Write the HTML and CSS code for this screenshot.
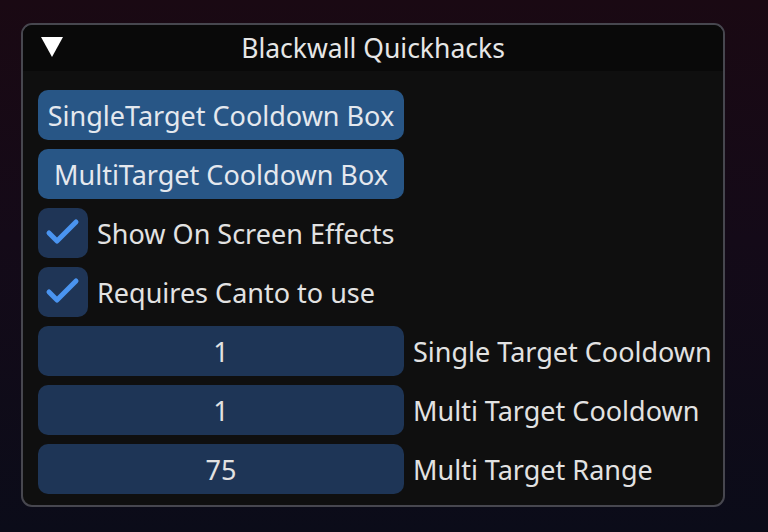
FILE: index.html
```html
<!DOCTYPE html>
<html>
<head>
<meta charset="utf-8">
<link rel="stylesheet" href="styles.css">
</head>
<body>
<div class="window">
  <div class="titlebar">
    <svg class="arrow" width="24" height="22" viewBox="0 0 24 22"><polygon points="1,1 23,1 12,21" fill="#ffffff"/></svg>
    <span class="title">Blackwall Quickhacks</span>
  </div>
  <div class="content">
    <div class="btn">SingleTarget Cooldown Box</div>
    <div class="btn">MultiTarget Cooldown Box</div>
    <div class="check-row">
      <div class="checkbox"><svg width="50" height="50" viewBox="0 0 50 50"><polyline points="11,25 19,33 38,14" fill="none" stroke="#4a94f0" stroke-width="5" stroke-linecap="round" stroke-linejoin="round"/></svg></div>
      <span class="label">Show On Screen Effects</span>
    </div>
    <div class="check-row">
      <div class="checkbox"><svg width="50" height="50" viewBox="0 0 50 50"><polyline points="11,25 19,33 38,14" fill="none" stroke="#4a94f0" stroke-width="5" stroke-linecap="round" stroke-linejoin="round"/></svg></div>
      <span class="label">Requires Canto to use</span>
    </div>
    <div class="input-row">
      <div class="input">1</div>
      <span class="label">Single Target Cooldown</span>
    </div>
    <div class="input-row">
      <div class="input">1</div>
      <span class="label">Multi Target Cooldown</span>
    </div>
    <div class="input-row">
      <div class="input">75</div>
      <span class="label">Multi Target Range</span>
    </div>
  </div>
</div>
</body>
</html>
```
FILE: styles.css
```css
html, body {
  margin: 0;
  height: 100%;
}
body {
  background: linear-gradient(180deg, #1a0913 0%, #140a18 45%, #0b0c19 100%);
  padding: 23px 0 0 21px;
  box-sizing: border-box;
  font-family: "Noto Sans", "Open Sans", sans-serif;
  font-size: 27px;
  color: #e2e2e2;
}
.window {
  width: 700px;
  height: 480px;
  border: 2px solid #47474f;
  border-radius: 11px;
  background: #0f0f0f;
  overflow: hidden;
  display: flex;
  flex-direction: column;
}
.titlebar {
  height: 46px;
  background: #090909;
  display: flex;
  align-items: center;
  justify-content: center;
  position: relative;
}
.arrow {
  position: absolute;
  left: 17px;
  top: 11px;
}
.title {
  font-size: 26.5px;
  color: #e6e6e6;
}
.content {
  padding: 19px 15px 0 15px;
  display: flex;
  flex-direction: column;
  gap: 9px;
}
.btn {
  width: 366px;
  height: 50px;
  box-sizing: border-box;
  background: #285686;
  border-radius: 10px;
  display: flex;
  align-items: center;
  justify-content: center;
  color: #e4e8ee;
  white-space: nowrap;
}
.check-row, .input-row {
  display: flex;
  align-items: center;
  height: 50px;
  white-space: nowrap;
}
.checkbox {
  width: 50px;
  height: 50px;
  flex: none;
  background: #1f3556;
  border-radius: 10px;
  margin-right: 9px;
}
.checkbox svg { display: block; }
.input {
  width: 366px;
  height: 50px;
  flex: none;
  background: #1e3556;
  border-radius: 10px;
  display: flex;
  align-items: center;
  justify-content: center;
  margin-right: 9px;
}
.label {
  color: #e2e2e2;
}
```
